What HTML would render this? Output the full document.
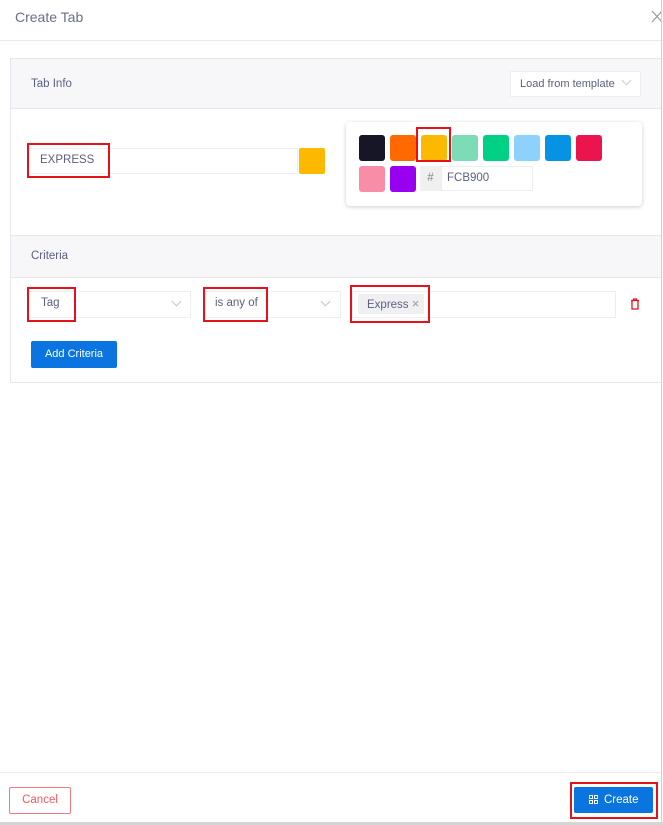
<!DOCTYPE html>
<html><head><style>
*{box-sizing:border-box;margin:0;padding:0}
body{width:663px;height:825px;position:relative;overflow:hidden;background:#fff;font-family:"Liberation Sans",sans-serif;color:#5b5f80;font-size:11.5px}
.a{position:absolute}
.red{position:absolute;border:2px solid #e3121b}
.sw{position:absolute;width:26px;height:26px;border-radius:3px}
.inp{position:absolute;border:1px solid #eceef3;background:#fff}
.chev{position:absolute;width:7px;height:7px;border-right:1px solid #c4c7d4;border-bottom:1px solid #c4c7d4;transform:rotate(45deg)}
</style></head><body>
<div class="a" style="left:15px;top:9px;font-size:14px;color:#6a6e8c">Create Tab</div>
<svg class="a" style="left:651px;top:10px" width="12" height="13" viewBox="0 0 12 13"><path d="M1 1L11 12M11 1L1 12" stroke="#999" stroke-width="1.2"/></svg>
<div class="a" style="left:0;top:40px;width:663px;height:1px;background:#e8eaf0"></div>
<div class="a" style="left:661px;top:0;width:1px;height:825px;background:#d0d0d0"></div>

<div class="a" style="left:10px;top:58px;width:653px;height:325px;border:1px solid #e6e8ee;border-right:none"></div>
<div class="a" style="left:11px;top:59px;width:650px;height:50px;background:#f7f7f9;border-bottom:1px solid #e6e8ee"></div>
<div class="a" style="left:31px;top:78px">Tab Info</div>
<div class="inp" style="left:510px;top:71px;width:131px;height:26px"></div>
<div class="a" style="left:520px;top:78px;font-size:11px">Load from template</div>
<div class="chev" style="left:623px;top:77px;border-color:#ccd"></div>

<div class="inp" style="left:28px;top:148px;width:270px;height:26px"></div>
<div class="a" style="left:40px;top:154px">EXPRESS</div>
<div class="red" style="left:27px;top:143px;width:83px;height:35px"></div>
<div class="a" style="left:299px;top:148px;width:26px;height:26px;background:#fcb900;border-radius:2px"></div>

<div class="a" style="left:346px;top:122px;width:296px;height:84px;background:#fff;border-radius:4px;box-shadow:0 1px 4px rgba(0,0,0,.2)"></div>
<div class="sw" style="left:359px;top:135px;background:#171626"></div>
<div class="sw" style="left:390px;top:135px;background:#ff6900"></div>
<div class="sw" style="left:421px;top:135px;background:#fcb900"></div>
<div class="sw" style="left:452px;top:135px;background:#7bdcb5"></div>
<div class="sw" style="left:483px;top:135px;background:#00d084"></div>
<div class="sw" style="left:514px;top:135px;background:#8ed1fc"></div>
<div class="sw" style="left:545px;top:135px;background:#0693e3"></div>
<div class="sw" style="left:576px;top:135px;background:#eb144c"></div>
<div class="sw" style="left:359px;top:166px;background:#f78da7"></div>
<div class="sw" style="left:390px;top:166px;background:#9900ef"></div>
<div class="a" style="left:420px;top:166px;width:21px;height:25px;background:#f0f0f0;color:#888;text-align:center;line-height:25px">#</div>
<div class="inp" style="left:441px;top:166px;width:92px;height:25px;padding-left:5px;line-height:23px">FCB900</div>
<div class="red" style="left:416px;top:127px;width:35px;height:35px"></div>

<div class="a" style="left:11px;top:235px;width:650px;height:1px;background:#e6e8ee"></div>
<div class="a" style="left:11px;top:236px;width:650px;height:42px;background:#f7f7f9;border-bottom:1px solid #e6e8ee"></div>
<div class="a" style="left:31px;top:250px">Criteria</div>

<div class="inp" style="left:28px;top:291px;width:163px;height:27px"></div>
<div class="a" style="left:41px;top:297px">Tag</div>
<div class="chev" style="left:173px;top:298px"></div>
<div class="red" style="left:27px;top:287px;width:49px;height:35px"></div>
<div class="inp" style="left:205px;top:291px;width:136px;height:27px"></div>
<div class="a" style="left:215px;top:297px">is any of</div>
<div class="chev" style="left:322px;top:298px"></div>
<div class="red" style="left:203px;top:287px;width:65px;height:35px"></div>
<div class="inp" style="left:352px;top:291px;width:264px;height:27px"></div>
<div class="a" style="left:358px;top:294px;width:66px;height:20px;background:#f0f0f3;border-radius:2px;padding-left:9px;line-height:20px">Express <span style="color:#999;font-size:13px">×</span></div>
<div class="red" style="left:350px;top:285px;width:80px;height:38px"></div>
<svg class="a" style="left:630px;top:298px" width="10" height="12" viewBox="0 0 10 12"><path d="M1 2.5h8M3.5 2.5V1h3v1.5M2 3v8h6V3" fill="none" stroke="#e3121b" stroke-width="1.3"/></svg>

<div class="a" style="left:31px;top:341px;width:86px;height:27px;background:#0a74e0;border-radius:2px;color:#fff;text-align:center;line-height:27px;font-size:11px">Add Criteria</div>

<div class="a" style="left:0;top:772px;width:661px;height:1px;background:#ececef"></div>
<div class="a" style="left:9px;top:787px;width:62px;height:27px;border:1px solid #f07a80;border-radius:2px;color:#f05a62;text-align:center;line-height:25px">Cancel</div>
<div class="a" style="left:574px;top:787px;width:79px;height:26px;background:#0a74e0;border-radius:2px;color:#fff;line-height:26px;padding-left:15px">
<svg width="9" height="9" viewBox="0 0 9 9" style="vertical-align:-1px;margin-right:6px"><g fill="none" stroke="#fff" stroke-width="1"><rect x=".5" y=".5" width="3" height="3"/><rect x="5.5" y=".5" width="3" height="3"/><rect x=".5" y="5.5" width="3" height="3"/><rect x="5.5" y="5.5" width="3" height="3"/></g></svg>Create</div>
<div class="red" style="left:570px;top:782px;width:88px;height:37px"></div>
<div class="a" style="left:0;top:822px;width:663px;height:3px;background:#d6d6d6"></div>
</body></html>
